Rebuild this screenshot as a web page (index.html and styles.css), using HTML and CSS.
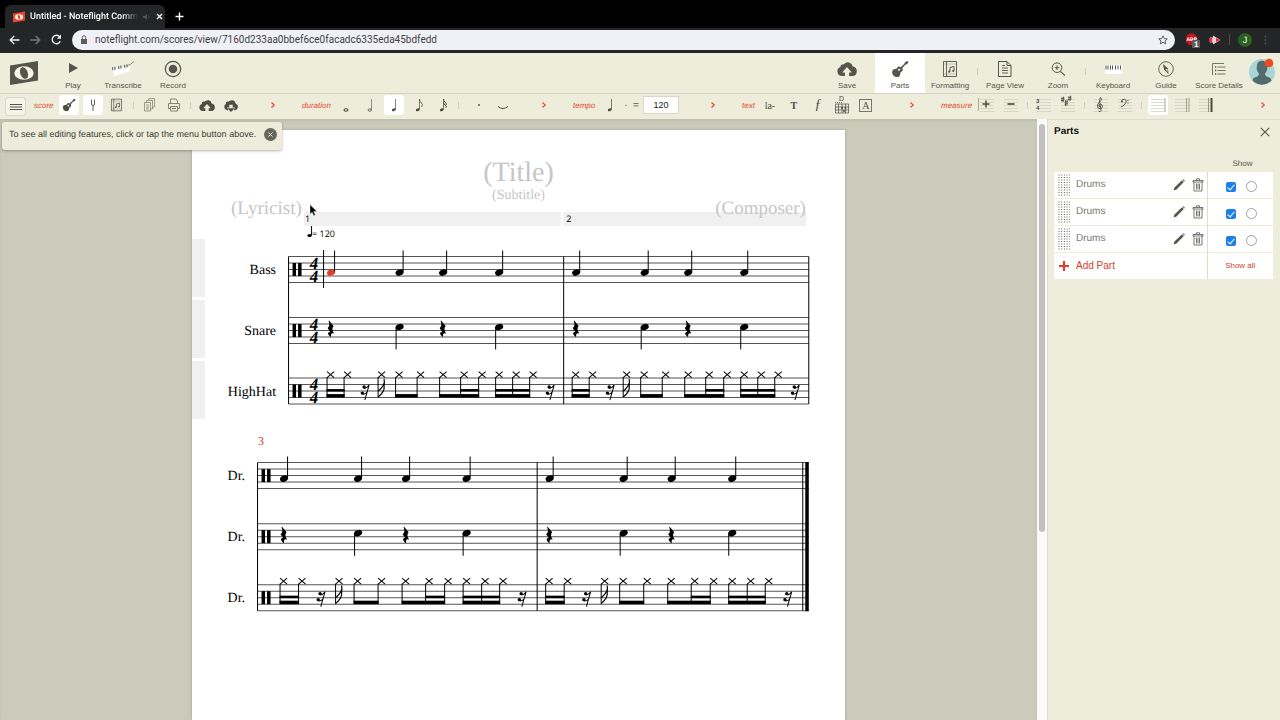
FILE: index.html
```html
<!DOCTYPE html>
<html lang="en">
<head>
    <meta charset="UTF-8">
    <meta name="viewport" content="width=device-width, initial-scale=1.0">
    <title>Untitled - Noteflight Community</title>
    <link rel="stylesheet" href="styles.css">
</head>
<body>

    <!-- Shared icons -->
    <svg class="sprite" aria-hidden="true">
        <symbol id="i-cloud" viewBox="0 0 20 16">
            <path d="M5 15a4.600 4.600 0 0 1-1.600-8.900A3 3 0 0 1 7 3.200 5 5 0 0 1 15.800 5.500 4.800 4.800 0 0 1 15.500 15h-3.400v-3.500h2.700L10 6 5.200 11.500h2.700V15z"/>
        </symbol>
        <symbol id="i-cloud-down" viewBox="0 0 20 16">
            <path d="M5 14a4.400 4.400 0 0 1-1.600-7.900A3 3 0 0 1 7 3.200 5 5 0 0 1 15.800 5.500 4.500 4.500 0 0 1 15.500 14h-2L15 10.500h-2.900V7H7.900v3.500H5L7 14z"/>
            <path d="M5.500 11.500h9L10 16z"/>
        </symbol>
        <symbol id="i-guitar" viewBox="0 0 20 20">
            <path d="M18 1l1.500 1.500-2 2.500-1-.2-4.200 4.400c1.500 1.300.8 2.900-.4 3.700-1.300.7-1.600 1.400-1.600 2.600 0 3.600-4.500 4.600-7.400 1.900C.3 14.800.9 10.300 4.400 10c1.300 0 2-.4 2.600-1.600.8-1.400 2.500-1.800 3.700-.4l4.500-4.200-.1-1z"/>
            <circle cx="9" cy="10.800" r="1.200" fill="#fff"/>
        </symbol>
        <symbol id="i-format" viewBox="0 0 16 18">
            <path d="M1.500 1.500h13v15h-13zM4.500 1.500v15" fill="none" stroke="currentColor" stroke-width=".9"/>
            <path d="M2 4h12M2 14h12" stroke="currentColor" stroke-width=".3"/>
            <path d="M8 11.500V7.500l4-1v4.500" fill="none" stroke="currentColor" stroke-width="1"/>
            <circle cx="7.200" cy="11.700" r="1.100"/><circle cx="11.200" cy="11" r="1.100"/>
        </symbol>
        <symbol id="i-note" viewBox="0 0 10 16">
            <path d="M6.500 2v10.500" stroke="currentColor" stroke-width=".7"/>
            <ellipse cx="4.800" cy="12.800" rx="2" ry="1.400" transform="rotate(-20 4.800 12.800)"/>
        </symbol>
        <symbol id="i-staff" viewBox="0 0 20 20">
            <path d="M3 4.500h14M3 7.500h14M3 10.500h14M3 13.500h14M3 16.500h14" stroke="#d3d2c2" stroke-width=".8"/>
        </symbol>
        <symbol id="i-chevron" viewBox="0 0 6 8">
            <path d="M1.500 1.500L4.300 4 1.500 6.500" fill="none" stroke="#e8442a" stroke-width="1.100"/>
        </symbol>
        <symbol id="i-pencil" viewBox="0 0 12 12">
            <path d="M.5 11.500l1-3L9 1.200l1.800 1.700L3.500 10.500z"/>
            <path d="M9.600.7l.8-.5 1.500 1.500-.6.700z"/>
        </symbol>
        <symbol id="i-trash" viewBox="0 0 12 14">
            <path d="M2 4v9h8V4M1 2.500h10V4H1zM4.500 2V.8h3V2M4.500 5.500v6M6 5.500v6M7.500 5.500v6" fill="none" stroke="currentColor" stroke-width=".8"/>
        </symbol>
        <symbol id="i-grip" viewBox="0 0 12 22">
            <path d="M.5 1H12M.5 3.500H12M.5 6H12M.5 8.500H12M.5 11H12M.5 13.500H12M.5 16H12M.5 18.500H12M.5 21H12" stroke="#5d5d56" stroke-width="1" stroke-dasharray="1 1.700"/>
        </symbol>
    </svg>

    <div class="tab-strip">
        <div class="tab">
            <svg width="12" height="12" viewBox="0 0 12 12"><path d="M0 2.500L12 .5v9L0 11.500z" fill="#e8472b"/><ellipse cx="6" cy="6" rx="4" ry="2.700" fill="#fff"/><ellipse cx="6" cy="6" rx="1.300" ry="2.200" fill="#e8472b" transform="rotate(-20 6 6)"/></svg>
            <span class="tab-title">Untitled - Noteflight Comm</span>
            <svg width="8" height="8" viewBox="0 0 8 8"><path d="M0 3h2l2-2v6L2 5H0z" fill="#55565a"/><path d="M5.500 2.500q1.500 1.500 0 3" fill="none" stroke="#45464a"/></svg>
            <button class="plain" aria-label="Close tab"><svg width="7" height="7" viewBox="0 0 7 7"><path d="M1 1l5 5M6 1L1 6" stroke="#fff" stroke-width="1.300"/></svg></button>
        </div>
        <button class="plain new-tab" aria-label="New tab"><svg width="9" height="9" viewBox="0 0 9 9"><path d="M4.500.5v8M.5 4.500h8" stroke="#fff" stroke-width="1.400"/></svg></button>
    </div>

    <div class="browser-bar">
        <button class="plain" aria-label="Back"><svg width="11" height="10" viewBox="0 0 11 10"><path d="M10.500 5H1.500M5.200 1L1.200 5l4 4" fill="none" stroke="#f1f1f1" stroke-width="1.300"/></svg></button>
        <button class="plain" aria-label="Forward"><svg width="11" height="10" viewBox="0 0 11 10"><path d="M.5 5h9M5.800 1l4 4-4 4" fill="none" stroke="#77787b" stroke-width="1.300"/></svg></button>
        <button class="plain" aria-label="Reload"><svg width="11" height="11" viewBox="0 0 11 11"><path d="M9.300 7.200A4.200 4.200 0 1 1 8.700 2.800" fill="none" stroke="#f1f1f1" stroke-width="1.400"/><path d="M10 .5v4.300H5.800z" fill="#f1f1f1"/></svg></button>
        <div class="address">
            <svg width="8" height="9" viewBox="0 0 8 9"><path d="M1 4h6v5H1z" fill="#5b5d62"/><path d="M2.300 4V2.400a1.700 1.700 0 0 1 3.400 0V4" fill="none" stroke="#5b5d62"/></svg>
            <input type="text" aria-label="Address" value="noteflight.com/scores/view/7160d233aa0bbef6ce0facadc6335eda45bdfedd">
            <svg width="10" height="10" viewBox="0 0 10 10"><path d="M5 .8l1.300 2.800 3 .3L7 5.900l.7 3L5 7.300 2.300 8.900l.7-3L.7 3.900l3-.3z" fill="none" stroke="#4b4d52" stroke-width=".9"/></svg>
        </div>
        <div class="extensions">
            <svg width="16" height="16" viewBox="0 0 16 16"><path d="M4 1.500h5L12 5v5l-3 3H4L1 10V5z" fill="#c5161c"/><text x="1.500" y="9" font-size="5">ABP</text><rect x="7" y="8" width="8" height="8" rx="1" fill="#5c5d61"/><text x="9" y="15" font-size="8">1</text></svg>
            <svg width="12" height="10" viewBox="0 0 12 10"><path d="M1 2.500h3V.5L11.500 5 4 9.500v-2H1z" fill="#f6c9cc"/><path d="M0 3h3v4H0zM7 3l4.500 2L7 7z" fill="#d8333f"/></svg>
            <span class="bar-line"></span>
            <span class="profile">J</span>
            <svg width="3" height="10" viewBox="0 0 3 10" fill="#eee"><circle cx="1.500" cy="1.500" r="1"/><circle cx="1.500" cy="5" r="1"/><circle cx="1.500" cy="8.500" r="1"/></svg>
        </div>
    </div>

    <header class="app-header">
        <svg class="logo" width="28" height="24" viewBox="0 0 28 24"><path d="M0 4.500L28 0v19.500L0 24z" fill="#55564b"/><ellipse cx="14" cy="12" rx="9.700" ry="6.800" fill="#f6f5e6"/><ellipse cx="14" cy="12" rx="3.700" ry="6" fill="#55564b" transform="rotate(-22 14 12)"/></svg>
        <button class="tool"><svg width="14" height="18" viewBox="0 0 14 18"><path d="M3 3l9 5-9 5z"/></svg>Play</button>
        <button class="tool"><svg width="24" height="18" viewBox="0 0 24 18"><path d="M1 9l18-3v5L3 16z" fill="#fff"/><path d="M1 7.500l1-.3.500 3-1 .2zM3.200 7l1-.3.500 3-1 .2zM7 6.300l1-.3.500 3-1 .2zM9.200 5.800l1-.3.500 3-1 .2zM13 5l1-.3.500 3-1 .2zM15.200 4.500l1-.3.500 3-1 .2z"/><path d="M16 5.500q3 0 7-4" stroke="#77786b" fill="none" stroke-width=".8"/></svg>Transcribe</button>
        <button class="tool"><svg width="18" height="18" viewBox="0 0 18 18"><circle cx="9" cy="9" r="7.700" fill="none" stroke="currentColor" stroke-width="1.200"/><circle cx="9" cy="9" r="4.300"/></svg>Record</button>

        <div class="header-right">
            <button class="tool save"><svg width="20" height="18" viewBox="0 0 20 16"><use href="#i-cloud" width="20" height="16"/></svg>Save</button>
            <button class="tool active"><svg width="18" height="18"><use href="#i-guitar"/></svg>Parts</button>
            <button class="tool"><svg width="16" height="18"><use href="#i-format"/></svg>Formatting</button>
            <span class="sep"></span>
            <button class="tool"><svg width="16" height="18" viewBox="0 0 16 18"><path d="M1.500 1.500h8.500l4 4v11H1.500zM10 1.500v4h4" fill="none" stroke="currentColor"/><path d="M5 5.500h3M5 8h6M5 10.500h6M5 13h6" stroke="currentColor" stroke-width=".9"/></svg>Page View</button>
            <button class="tool next"><svg width="18" height="18" viewBox="0 0 18 18"><path d="M11.300 11.300L16 15.500M8 5.500v4.500M5.700 7.700h4.600" stroke="currentColor" stroke-width="1.100"/><circle cx="8" cy="7.700" r="4.800" fill="none" stroke="currentColor"/></svg>Zoom</button>
            <span class="sep"></span>
            <button class="tool"><svg width="18" height="18" viewBox="0 0 18 18"><path d="M1 5h17v9H1z" fill="#fff"/><path d="M1.500 5.500h1v4h-1zM3.500 5.500h1v4h-1zM6 5.500h1v4H6zM8 5.500h1v4H8zM11 5.500h1v4h-1zM13.500 5.500h1v4h-1zM16 5.500h1v4h-1z"/></svg>Keyboard</button>
            <button class="tool next"><svg width="18" height="18" viewBox="0 0 18 18"><circle cx="9" cy="9" r="7.300" fill="none" stroke="currentColor" stroke-width=".9"/><path d="M6 4l5 4.500.5 5.500L7 9.500z"/><path d="M8.300 9l2.200-.3.300 3.300z" fill="#eeeddc"/></svg>Guide</button>
            <button class="tool next"><svg width="16" height="18" viewBox="0 0 16 18"><path d="M1.500 15V3.500H13M6.500 7h8M6.500 10.500h8M6.500 14h8" fill="none" stroke="currentColor" stroke-width=".8"/><path d="M4 7h1.300M4 10.500h1.300M4 14h1.300" stroke="currentColor" stroke-width="1.300"/></svg>Score Details</button>
            <button class="plain avatar" aria-label="Account"><svg width="28" height="34" viewBox="0 0 28 34"><circle cx="14" cy="19" r="13" fill="#abd5d6"/><path d="M9 13c0-7 10-7 10 0 1 3-.5 6-2 7.500 0 3 2 3 5.500 4.500l1 2.500a13 13 0 0 1-19 0l1-2.500c3.500-1.500 5.500-1.500 5.500-4.500C9.500 19 8 16 9 13z" fill="#526b6d"/><circle cx="21" cy="10" r="4.300" fill="#f04a23"/></svg></button>
        </div>
    </header>

    <nav class="edit-bar">
        <button class="menu-btn" aria-label="Menu"><svg width="12" height="8" viewBox="0 0 12 8"><path d="M0 1.500h12M0 4h12M0 6.500h12" stroke="#55564b" stroke-width="1"/></svg></button>

        <div class="section score-section">
            <span class="label">score</span>
            <button class="btn on" aria-label="Instruments"><svg width="14" height="14"><use href="#i-guitar"/></svg></button>
            <button class="btn on" aria-label="Tuning"><svg width="8" height="14" viewBox="0 0 8 14"><path d="M2.500 1.500V6q0 1.500 1.500 1.500T5.500 6V1.500M4 7.500V13" fill="none" stroke="currentColor" stroke-width=".9"/></svg></button>
            <button class="btn" aria-label="Format"><svg width="13" height="14"><use href="#i-format"/></svg></button>
            <span class="sep"></span>
            <button class="btn soft" aria-label="Copy"><svg width="13" height="14" viewBox="0 0 13 14"><path d="M1.500 4.500h6V13h-6zM3.500 4V2.500h6V11H8M5.500 2V.7h6V9H10M3 7h3M3 9h3M3 11h3" fill="none" stroke="currentColor" stroke-width=".7"/></svg></button>
            <button class="btn soft" aria-label="Print"><svg width="14" height="14" viewBox="0 0 14 14"><path d="M3.500 5V1h5.500l1.500 2v2M3 10.500H1.500V5.500h11v5H11M3.500 8.500h7V13h-7zM5 10.500h4" fill="none" stroke="currentColor" stroke-width=".9"/></svg></button>
            <span class="sep"></span>
            <button class="btn" aria-label="Upload"><svg width="16" height="13"><use href="#i-cloud"/></svg></button>
            <button class="btn" aria-label="Download"><svg width="16" height="13"><use href="#i-cloud-down"/></svg></button>
            <svg class="chevron" width="6" height="8"><use href="#i-chevron"/></svg>
        </div>

        <div class="section duration-section">
            <span class="label">duration</span>
            <button class="btn" aria-label="Whole"><svg width="10" height="16" viewBox="0 0 10 16"><ellipse cx="5" cy="13" rx="2" ry="1.200" fill="none" stroke="currentColor" stroke-width="1.100"/></svg></button>
            <button class="btn" aria-label="Half"><svg width="10" height="16" viewBox="0 0 10 16"><path d="M6.500 2v11" stroke="currentColor" stroke-width=".6"/><ellipse cx="4.800" cy="13" rx="1.700" ry="1.200" fill="none" stroke="currentColor" stroke-width=".8"/></svg></button>
            <button class="btn on" aria-label="Quarter"><svg width="10" height="16"><use href="#i-note"/></svg></button>
            <button class="btn" aria-label="Eighth"><svg width="10" height="16" viewBox="0 0 10 16"><use href="#i-note" width="10" height="16"/><path d="M6.500 2q0 2.500 2 4t0 4" fill="none" stroke="currentColor" stroke-width=".8"/></svg></button>
            <button class="btn" aria-label="Sixteenth"><svg width="10" height="16" viewBox="0 0 10 16"><use href="#i-note" width="10" height="16"/><path d="M6.500 2q0 2 2 3.500t0 3M6.500 5q0 2 2 3.500t0 2.500" fill="none" stroke="currentColor"/></svg></button>
            <span class="sep"></span>
            <button class="btn wide" aria-label="Dot"><svg width="4" height="4" viewBox="0 0 4 4"><circle cx="2" cy="2" r=".9"/></svg></button>
            <button class="btn tie" aria-label="Tie"><svg width="12" height="10" viewBox="0 0 12 10"><path d="M1 6.500q5 4 10 0" fill="none" stroke="currentColor"/></svg></button>
            <svg class="chevron" width="6" height="8"><use href="#i-chevron"/></svg>
        </div>

        <div class="section tempo-section">
            <span class="label">tempo</span>
            <button class="btn" aria-label="Beat unit"><svg width="10" height="16"><use href="#i-note"/></svg></button>
            <label class="equals" for="tempo">·&nbsp; =</label>
            <input type="text" id="tempo" value="120">
            <svg class="chevron" width="6" height="8"><use href="#i-chevron"/></svg>
        </div>

        <div class="section text-section">
            <span class="label">text</span>
            <button class="btn serif">la-</button>
            <button class="btn serif"><b>T</b></button>
            <button class="btn serif big"><i>ƒ</i></button>
            <button class="btn" aria-label="Chord D"><svg width="16" height="20" viewBox="0 0 16 20"><text x="5" y="6" font-size="7">D</text><path d="M1.500 9h13v9h-13zM4.500 9v9M8 9v9M11.500 9v9M1 12h14M1 15h14" fill="none" stroke="currentColor" stroke-width=".7"/><path d="M1 7.500h7" stroke="currentColor" stroke-width=".7" stroke-dasharray="1 1"/><circle cx="8" cy="13" r="1"/><circle cx="11.500" cy="13" r="1"/><circle cx="10" cy="16" r="1"/></svg></button>
            <button class="btn"><span class="boxed">A</span></button>
            <svg class="chevron" width="6" height="8"><use href="#i-chevron"/></svg>
        </div>

        <div class="section measure-section">
            <span class="label">measure</span>
            <button class="btn" aria-label="Add measure"><svg width="20" height="20" viewBox="0 0 20 20"><use href="#i-staff" width="20" height="20"/><path d="M1.500 3v13" stroke="#aaab9c"/><path d="M9 5.500v7M5.500 9h7" stroke="currentColor" stroke-width="1.500"/></svg></button>
            <button class="btn" aria-label="Remove measure"><svg width="20" height="20" viewBox="0 0 20 20"><use href="#i-staff" width="20" height="20"/><path d="M6.500 9h7" stroke="currentColor" stroke-width="1.600"/></svg></button>
            <span class="sep"></span>
            <button class="btn" aria-label="Time signature"><svg width="20" height="20" viewBox="0 0 20 20"><use href="#i-staff" width="20" height="20"/><text x="2" y="8" font-size="6" font-weight="bold">3</text><text x="2" y="15" font-size="6" font-weight="bold">4</text></svg></button>
            <button class="btn" aria-label="Key signature"><svg width="20" height="20" viewBox="0 0 20 20"><use href="#i-staff" width="20" height="20"/><path d="M4 2v5M5.500 1.700v5M3 3.800l3.500-.8M3 5.700l3.500-.8M7.500 5v6M9 4.700v6M6.500 7.300l3.500-.8M6.500 9.300l3.500-.8M11 1v5M12.500.7v5M10 2.800l3.500-.8M10 4.700l3.500-.8" stroke="currentColor" stroke-width=".8"/></svg></button>
            <span class="sep"></span>
            <button class="btn" aria-label="Treble clef"><svg width="20" height="20" viewBox="0 0 20 20"><use href="#i-staff" width="20" height="20"/><path d="M9.500 12q-2-.5-1.500-2 1.500-2 3.200 0 1 3-1.700 4-3.500 0-3-4 1-2.500 3.500-4.500Q11 3 9.500 2.500 8 4 8.700 7.500l1.300 8q-.5 2-2.300.8" fill="none" stroke="currentColor" stroke-width=".9"/></svg></button>
            <button class="btn" aria-label="Bass clef"><svg width="20" height="20" viewBox="0 0 20 20"><use href="#i-staff" width="20" height="20"/><path d="M6.500 6Q7 4 9.500 4.300q3 .7.500 4.700-1.500 2-4 3" fill="none" stroke="currentColor" stroke-width=".9"/><circle cx="7" cy="6.500" r="1"/><circle cx="13" cy="5.500" r=".6"/><circle cx="13" cy="8" r=".6"/></svg></button>
            <span class="sep"></span>
            <button class="btn on" aria-label="Barline"><svg width="20" height="20" viewBox="0 0 20 20"><use href="#i-staff" width="20" height="20"/><path d="M17 3v14" stroke="#aaab9c"/></svg></button>
            <button class="btn" aria-label="Double barline"><svg width="20" height="20" viewBox="0 0 20 20"><use href="#i-staff" width="20" height="20"/><path d="M14.500 3v14M17 3v14" stroke="#99998b" stroke-width=".9"/></svg></button>
            <button class="btn" aria-label="Final barline"><svg width="20" height="20" viewBox="0 0 20 20"><use href="#i-staff" width="20" height="20"/><path d="M12.500 3v14" stroke="#88897b" stroke-width=".9"/><path d="M15.500 3v14" stroke="currentColor" stroke-width="2"/></svg></button>
            <svg class="chevron" width="6" height="8"><use href="#i-chevron"/></svg>
        </div>
    </nav>

    <div class="content">
        <main class="workspace">
            <div class="toast">
                <span>To see all editing features, click or tap the menu button above.</span>
                <button class="toast-close" aria-label="Dismiss"><svg width="5" height="5" viewBox="0 0 5 5"><path d="M.5.5l4 4M4.500.5l-4 4" stroke="#eeeddc"/></svg></button>
            </div>
            <article class="page">
                <h1>(Title)</h1>
                <h2>(Subtitle)</h2>
                <div class="credits"><span>(Lyricist)</span><span>(Composer)</span></div>
                <svg id="score" class="score" viewBox="0 0 653 410"></svg>
            </article>
            <svg class="pointer" width="9" height="13" viewBox="0 0 9 13"><path d="M1 .5v9.700l2.100-2 1.700 3.600 1.600-.7-1.700-3.500H8z" stroke="#fff" stroke-width=".4"/></svg>
        </main>

        <div class="scroll-track"><div class="scroll-thumb"></div></div>

        <aside class="parts">
            <div class="parts-head">
                <h3>Parts</h3>
                <button class="plain" aria-label="Close panel"><svg width="10" height="10" viewBox="0 0 10 10"><path d="M.8.8l8.400 8.400M9.200.8L.8 9.200" stroke="#55564b" stroke-width="1.100"/></svg></button>
            </div>
            <table>
                <thead>
                    <tr><th></th><th>Show</th></tr>
                </thead>
                <tbody id="part-rows"></tbody>
                <tfoot>
                    <tr>
                        <td><button class="plain add-part"><svg width="10" height="10" viewBox="0 0 10 10"><path d="M5 0v10M0 5h10" stroke="#e0402a" stroke-width="2.200"/></svg>Add Part</button></td>
                        <td><button class="plain show-all">Show all</button></td>
                    </tr>
                </tfoot>
            </table>
        </aside>
    </div>

    <script src="score.js"></script>
</body>
</html>
```
FILE: styles.css
```css
* {
    margin: 0;
    padding: 0;
    box-sizing: border-box;
}

body {
    display: flex;
    flex-direction: column;
    height: 100vh;
    overflow: hidden;
    background-color: #eeeddc;
    color: #55564b;
    font-family: "Liberation Sans", Arial, sans-serif;
    font-size: 10px;
    text-rendering: geometricPrecision;
}

button {
    font: inherit;
    color: inherit;
    border: none;
    background: none;
    cursor: pointer;
}

svg {
    display: block;
    flex: none;
    fill: currentColor;
}

.sprite {
    position: absolute;
    width: 0;
    height: 0;
}

.plain {
    display: flex;
    align-items: center;
}

/* Browser window */
.tab-strip {
    display: flex;
    flex: none;
    height: 28px;
    padding: 5px 5px 0;
    background-color: #000;
}

.tab {
    display: flex;
    align-items: center;
    gap: 5px;
    width: 160px;
    padding: 0 7px 0 8px;
    border-radius: 6px 6px 0 0;
    background-color: #242527;
    color: #fff;
}

.tab-title {
    flex: 1;
    white-space: nowrap;
    font-family: Roboto, sans-serif;
    font-size: 9px;
    font-weight: 500;
    -webkit-mask-image: linear-gradient(to right, #000 85%, transparent);
    mask-image: linear-gradient(to right, #000 85%, transparent);
}

.new-tab {
    margin-left: 10px;
}

.browser-bar {
    display: flex;
    flex: none;
    align-items: center;
    gap: 10px;
    height: 25px;
    padding: 0 13px 2px 9px;
    background-color: #242527;
}

.address {
    display: flex;
    flex: 1;
    align-items: center;
    gap: 7px;
    height: 20px;
    padding: 0 7px 0 8px;
    border-radius: 10px;
    background-color: #f0f1f6;
}

.address input {
    flex: 1;
    border: none;
    background: none;
    color: #404247;
    font-family: Roboto, sans-serif;
    font-size: 10px;
}

.extensions {
    display: flex;
    align-items: center;
    gap: 8px;
    font-weight: bold;
}

.extensions text {
    fill: #fff;
}

.bar-line {
    width: 1px;
    height: 11px;
    background-color: #4a4b4e;
}

.profile {
    width: 14px;
    height: 14px;
    margin-right: 4px;
    border-radius: 50%;
    background-color: #2c6021;
    color: #fff;
    font-size: 9px;
    font-weight: normal;
    line-height: 14px;
    text-align: center;
}

/* Main toolbar */
.app-header {
    display: flex;
    flex: none;
    height: 41px;
    border-bottom: 1px solid #d3d2c2;
}

.logo {
    margin: 8px 10px;
}

.tool {
    display: flex;
    flex-direction: column;
    align-items: center;
    gap: 3px;
    width: 50px;
    padding-top: 7px;
    font-size: 8px;
    line-height: 10px;
    white-space: nowrap;
}

.tool.active {
    background-color: #fff;
}

.tool.save {
    margin-right: 3px;
}

.tool.next {
    margin-left: 3px;
}

.header-right {
    display: flex;
    margin-left: auto;
}

.header-right .sep {
    margin-top: 15px;
}

.sep {
    width: 1px;
    height: 7px;
    margin: 0 2px;
    background-color: #cfcebe;
}

.avatar {
    margin: 0 4px;
    align-items: flex-start;
}

/* Editing toolbar */
.edit-bar {
    display: flex;
    flex: none;
    align-items: center;
    height: 25px;
    padding-bottom: 3px;
}

.menu-btn {
    display: flex;
    align-items: center;
    justify-content: center;
    width: 21px;
    height: 19px;
    margin: 3px 0 0 5px;
    border: 1px solid #d8d7c8;
    border-radius: 3px;
    background-color: #f5f4e8;
}

.section {
    display: flex;
    align-items: center;
    gap: 4px;
    padding: 0 14px 0 12px;
}

.score-section {
    width: 264px;
    padding-left: 8px;
}

.duration-section {
    width: 271px;
}

.tempo-section {
    width: 169px;
}

.text-section {
    width: 199px;
}

.measure-section {
    flex: 1;
}

.label {
    margin-right: 1px;
    color: #e5492f;
    font-size: 8px;
    font-style: italic;
}

.btn {
    display: flex;
    align-items: center;
    justify-content: center;
    width: 20px;
    height: 20px;
    border-radius: 3px;
    color: #4c4d43;
}

.btn.on {
    background-color: #fff;
}

.btn.soft {
    color: #77786b;
}

.btn.wide {
    width: 28px;
}

.btn.tie {
    margin-left: -4px;
}

.btn.serif {
    font-family: "Liberation Serif", serif;
}

.btn.big {
    font-size: 14px;
}

.boxed {
    width: 13px;
    border: 1px solid #77786b;
    font-family: "Liberation Serif", serif;
    line-height: 11px;
}

.chevron {
    margin-left: auto;
}

.equals {
    white-space: nowrap;
}

.tempo-section input {
    width: 36px;
    height: 18px;
    border: 1px solid #d8d7c8;
    background-color: #fff;
    color: #222;
    font-family: "Liberation Sans", Arial, sans-serif;
    font-size: 9px;
    text-align: center;
}

/* Score area */
.content {
    display: flex;
    flex: 1;
    min-height: 0;
}

.workspace {
    position: relative;
    flex: 1;
    overflow: hidden;
    padding-top: 11px;
    background-color: #cbcbbb;
    box-shadow: inset 0 2px 3px #bfbfaf;
}

.toast {
    position: absolute;
    z-index: 1;
    top: 3px;
    left: 2px;
    display: flex;
    align-items: center;
    gap: 8px;
    height: 28px;
    padding: 0 5px 4px 7px;
    border-radius: 3px;
    background-color: #eeeddc;
    box-shadow: 0 1px 3px rgba(0, 0, 0, 0.3);
    color: #3c3d35;
    font-size: 9px;
    white-space: nowrap;
}

.toast-close {
    display: flex;
    align-items: center;
    justify-content: center;
    width: 13px;
    height: 13px;
    border-radius: 50%;
    background-color: #66675d;
}

.page {
    width: 63%;
    height: 100%;
    margin: 0 auto;
    padding-top: 27px;
    background-color: #fff;
    box-shadow: 0 0 3px rgba(0, 0, 0, 0.2);
    color: #c6c6c6;
    font-family: "Liberation Serif", serif;
    text-align: center;
}

.page h1 {
    font-size: 28px;
    font-weight: normal;
    line-height: 32px;
}

.page h2 {
    font-size: 14px;
    font-weight: normal;
    line-height: 14px;
}

.credits {
    position: relative;
    z-index: 1;
    display: flex;
    justify-content: space-between;
    height: 7px;
    padding: 0 6%;
    font-size: 19px;
    line-height: 12px;
}

.score {
    width: 100%;
    overflow: visible;
    color: #000;
}

.score .staff-line {
    stroke: #555;
    stroke-width: 1;
}

.score .line {
    stroke: #000;
    stroke-width: 1;
}

.score .marker {
    fill: #f0f0f0;
}

.score .part-name {
    font-size: 14px;
    text-anchor: end;
}

.score .time {
    font-size: 17px;
    font-style: italic;
    font-weight: bold;
    text-anchor: middle;
}

.score .small {
    font-family: "Open Sans", sans-serif;
    font-size: 9px;
}

.score .measure-number {
    fill: #d4412c;
    font-size: 12px;
}

.pointer {
    position: absolute;
    z-index: 2;
    top: 85px;
    left: 309px;
    color: #000;
}

.scroll-track {
    width: 10px;
    padding: 5px 2px;
    background-color: #fafafa;
}

.scroll-thumb {
    height: 69%;
    border-radius: 3px;
    background-color: #c1c1c1;
}

/* Parts panel */
.parts {
    width: 233px;
    padding: 6px 7px 0 6px;
    border-left: 1px solid #dddccd;
    border-top: 1px solid #dddccd;
}

.parts-head {
    display: flex;
    justify-content: space-between;
    padding-right: 3px;
}

.parts h3 {
    color: #111;
    font-size: 10px;
    line-height: 12px;
}

.parts table {
    width: 100%;
    margin-top: 15px;
    border-collapse: collapse;
    table-layout: fixed;
}

.parts th {
    height: 18px;
    font-size: 8px;
    font-weight: normal;
    vertical-align: bottom;
    padding-bottom: 3px;
}

.parts th:last-child {
    width: 66px;
    padding-left: 5px;
}

.parts td {
    height: 27px;
    border-top: 1px solid #eeeddc;
    background-color: #fff;
}

.parts td:last-child {
    border-left: 1px solid #dddccd;
}

.part,
.shows {
    display: flex;
    align-items: center;
}

.part {
    gap: 7px;
    padding: 0 3px 0 4px;
}

.part-label {
    flex: 1;
    margin-left: -1px;
    color: #77776f;
    font-size: 10px;
}

.shows {
    gap: 10px;
    padding: 4px 0 0 18px;
}

.shows input {
    appearance: none;
    width: 10px;
    height: 10px;
}

.shows input[type="checkbox"] {
    border-radius: 2px;
    background-color: #1f7fe8;
}

.shows input[type="checkbox"]::after {
    content: "";
    display: block;
    width: 3px;
    height: 6px;
    margin: 1px 0 0 3px;
    border: solid #fff;
    border-width: 0 1px 1px 0;
    transform: rotate(40deg);
}

.shows input[type="radio"] {
    width: 11px;
    height: 11px;
    border: 1px solid #a0a0a0;
    border-radius: 50%;
}

.add-part {
    gap: 7px;
    padding-left: 5px;
    color: #d4412c;
}

.show-all {
    margin: 0 auto;
    color: #d4412c;
    font-size: 8px;
}
```
FILE: score.js
```js
const score = document.getElementById('score');
let out = '';

function line(x1, y1, x2, y2, cls = 'line') {
    out += `<path class="${cls}" d="M${x1} ${y1}L${x2} ${y2}"/>`;
}

function rect(x, y, w, h, cls = '') {
    out += `<rect class="${cls}" x="${x}" y="${y}" width="${w}" height="${h}"/>`;
}

function text(x, y, str, cls) {
    out += `<text class="${cls}" x="${x}" y="${y}">${str}</text>`;
}

function head(x, y, color = '#000') {
    out += `<ellipse cx="${x}" cy="${y}" rx="4.2" ry="3" fill="${color}" transform="rotate(-22 ${x} ${y})"/>`;
}

function quarterRest(x, y) {
    out += `<path transform="translate(${x} ${y})" d="M-1.500-9L3-3.500Q.5-.5 3.500 4Q0 2.500.5 7L0 7.500Q-5 3 -.5 2.200L-3-1.500Q0-4-2-8.500z"/>`;
}

function sixteenthRest(x, y) {
    out += `<g transform="translate(${x} ${y})"><circle cx="-1" cy="-4" r="1.700"/><circle cx="-2.800" cy="2" r="1.700"/>
        <path d="M-1-2.800Q2-2.800 4-6L-.3 9M-2.500 3.200Q.5 3.500 2 1" fill="none" stroke="#000" stroke-width="1"/></g>`;
}

function cross(x, y) {
    out += `<path d="M${x - 3.5} ${y - 3}l7 6m0-6l-7 6" stroke="#000" stroke-width="1"/>`;
}

// beat: x of the four quarters, hat: x of the hi-hat figure
function measure(beat, hat, tops, firstColor) {
    const [bass, snare, hh] = tops;

    beat.forEach((x, i) => {
        const color = i === 0 ? firstColor : '#000';
        head(x, bass + 16, color);
        line(x + 3.5, bass + 15, x + 3.5, bass - 6);
        if (i % 2) {
            head(x, snare + 9.5);
            line(x - 3.5, snare + 10, x - 3.5, snare + 32);
        } else {
            quarterRest(x - 0.5, snare + 12);
        }
    });

    hat.forEach((x, i) => {
        if (i === 2 || i === 12) {
            sixteenthRest(x, hh + 13);
            return;
        }
        cross(x, hh - 3.5);
        line(x - 3.5, hh - 1, x - 3.5, hh + 19);
    });

    const fx = hat[3] - 3.5;
    out += `<path d="M${fx} ${hh + 19}q7-6 6-11q.5-4 0-7M${fx} ${hh + 13}q5-4 6-8" fill="none" stroke="#000" stroke-width="1.200"/>`;

    [[0, 1], [4, 5], [6, 8], [9, 11]].forEach(([a, b]) => {
        rect(hat[a] - 4, hh + 16, hat[b] - hat[a] + 1, 3.5);
    });
    [[0, 1], [7, 8], [9, 11]].forEach(([a, b]) => {
        rect(hat[a] - 4, hh + 11, hat[b] - hat[a] + 1, 2.5);
    });
}

function system(left, tops, names) {
    tops.forEach((top, i) => {
        [0, 6.5, 13, 19.5, 26].forEach(dy => line(left, top + dy, 616.5, top + dy, 'staff-line'));
        text(left - 12.5, top + 17.5, names[i], 'part-name');
        rect(left + 4, top + 6.5, 3.5, 13);
        rect(left + 9.5, top + 6.5, 3.5, 13);
    });
    line(left, tops[0], left, tops[2] + 26);
}

const shift = (list, dx) => list.map(x => x + dx);

// selection strips above and beside the staves
rect(112, 2, 257, 14, 'marker');
rect(371, 2, 243, 14, 'marker');
[29, 90, 151].forEach(y => rect(0, y, 13, 58, 'marker'));
text(113, 12, '1', 'small');
text(374, 12, '2', 'small');
text(120, 27, '= 120', 'small');
line(119.5, 16, 119.5, 25);
out += '<ellipse cx="117.500" cy="25.500" rx="2.200" ry="1.600"/>';

const first = [46.5, 107.5, 168];
const beat1 = [139, 207.5, 251, 307];
const hat1 = [138.5, 155.5, 173, 189.5, 207, 228.5, 251, 272, 290, 307, 324, 341, 358];
system(96.5, first, ['Bass', 'Snare', 'HighHat']);
first.forEach(top => {
    text(122, top + 12, '4', 'time');
    text(122, top + 25, '4', 'time');
});
measure(beat1, hat1, first, '#e0402a');
measure(shift(beat1, 245), shift(hat1, 245), first, '#000');
line(131.5, 40, 131.5, 78);
line(371.5, 46.5, 371.5, 194);
line(616.5, 46.5, 616.5, 194);

const second = [252.5, 313.5, 374.5];
const beat3 = [92, 166, 214, 274.5];
const hat3 = [91.5, 110, 129, 147, 165.5, 189.5, 213.5, 237, 256, 274.5, 293, 311, 330];
text(66, 235, '3', 'measure-number');
system(65.5, second, ['Dr.', 'Dr.', 'Dr.']);
measure(beat3, hat3, second, '#000');
measure(shift(beat3, 265.5), shift(hat3, 265.5), second, '#000');
line(345, 252.5, 345, 400.5);
line(610.5, 252.5, 610.5, 400.5);
rect(613, 252, 3.5, 149);

score.innerHTML = out;

// parts list
document.getElementById('part-rows').innerHTML = [1, 2, 3].map(n => `
    <tr>
        <td><div class="part">
            <svg width="12" height="22"><use href="#i-grip"/></svg>
            <label class="part-label" for="show${n}">Drums</label>
            <button class="plain" aria-label="Edit part"><svg width="12" height="12"><use href="#i-pencil"/></svg></button>
            <button class="plain" aria-label="Delete part"><svg width="12" height="14"><use href="#i-trash"/></svg></button>
        </div></td>
        <td><div class="shows">
            <input type="checkbox" id="show${n}" checked>
            <input type="radio" name="solo" aria-label="Show only part ${n}">
        </div></td>
    </tr>`).join('');
```
